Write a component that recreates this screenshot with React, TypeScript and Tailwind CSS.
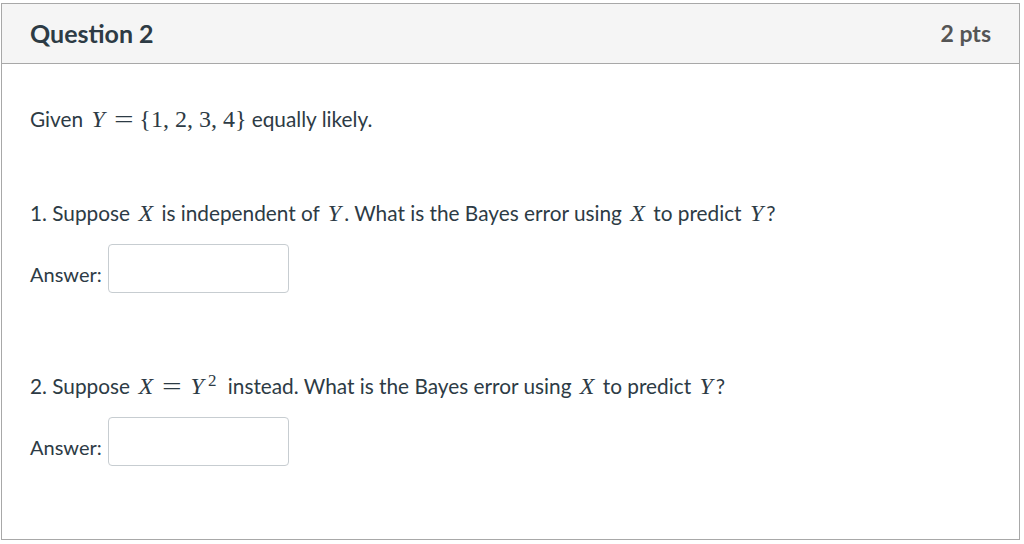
import React from 'react';

const serif = '"Liberation Serif", "DejaVu Serif", serif';

function M({ children, up }: { children: React.ReactNode; up?: boolean }) {
  return (
    <span
      className={`text-[24px] leading-none ${up ? 'not-italic' : 'italic px-[3px]'}`}
      style={{ fontFamily: serif }}
    >
      {children}
    </span>
  );
}

function Eq() {
  return (
    <span
      className="inline-block text-[24px] leading-none mx-[9px] scale-x-[1.45]"
      style={{ fontFamily: serif }}
    >
      =
    </span>
  );
}

function AnswerRow() {
  return (
    <div className="flex items-center gap-[6px]">
      <span className="mt-[10px] text-[20px]">Answer:</span>
      <div className="w-[181px] h-[49px] border border-[#c7cdd1] rounded-[4px] bg-white" />
    </div>
  );
}

export default function App() {
  return (
    <div className="w-[1024px] h-[544px] bg-white pt-[3px] pl-[1px]" style={{ fontFamily: 'Lato, "Open Sans", sans-serif' }}>
      <div className="w-[1019px] h-[537px] border border-[#a8a8a8] text-[#2d3b45]">
        <div className="h-[60px] bg-[#f5f5f5] border-b border-[#a8a8a8] flex items-center justify-between pl-[28px] pr-[28px]">
          <h2 className="text-[25px] font-bold text-[#2d3b45] mt-[1px]">Question 2</h2>
          <span className="text-[23px] font-bold text-[#555]">2 pts</span>
        </div>
        <div className="pl-[28px] text-[20.8px] leading-[30px]">
          <p className="mt-[40px]">
            Given <M>Y</M><Eq /><M up>{'{1, 2, 3, 4}'}</M> equally likely.
          </p>
          <p className="mt-[64px]">
            1. Suppose <M>X</M> is independent of <M>Y</M>. What is the Bayes error using <M>X</M> to predict <M>Y</M>?
          </p>
          <div className="mt-[16px]">
            <AnswerRow />
          </div>
          <p className="mt-[78px]">
            2. Suppose <M>X</M><Eq /><M>Y</M>
            <sup className="text-[17px] not-italic leading-none ml-[1px] mr-[6px]" style={{ fontFamily: serif }}>2</sup> instead. What is the Bayes error using <M>X</M> to predict <M>Y</M>?
          </p>
          <div className="mt-[16px]">
            <AnswerRow />
          </div>
        </div>
      </div>
    </div>
  );
}
